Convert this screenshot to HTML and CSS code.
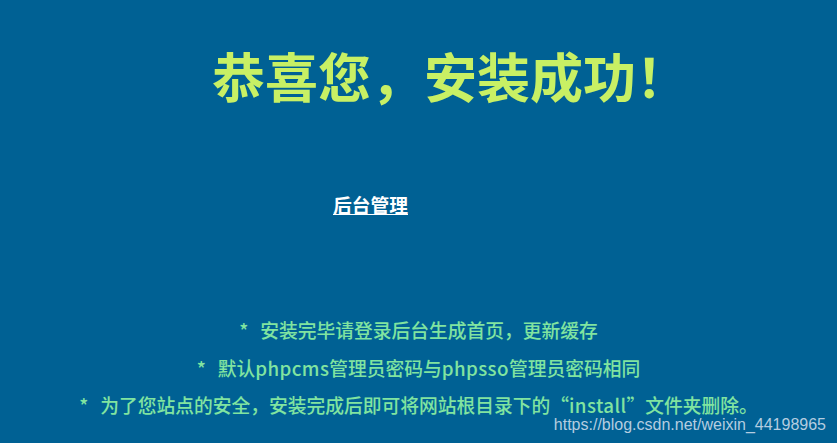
FILE: index.html
```html
<!DOCTYPE html>
<html lang="zh-CN">
<head>
<meta charset="utf-8">
<title>安装成功</title>
<link rel="stylesheet" href="styles.css">
</head>
<body>
<div class="page">
  <h1 class="title">恭喜您，安装成功！</h1>
  <div class="admin"><a class="admin-link" href="#">后台管理</a></div>
  <ul class="notes">
    <li class="note"><span class="star">*</span>安装完毕请登录后台生成首页，更新缓存</li>
    <li class="note"><span class="star">*</span>默认<span class="latin">phpcms</span>管理员密码与<span class="latin">phpsso</span>管理员密码相同</li>
    <li class="note"><span class="star">*</span>为了您站点的安全，安装完成后即可将网站根目录下的“<span class="latin">install</span>”文件夹删除。</li>
  </ul>
  <div class="watermark">https://blog.csdn.net/weixin_44198965</div>
</div>
</body>
</html>
```

FILE: styles.css
```css
html, body {
  margin: 0;
  padding: 0;
}
body {
  background: #006194;
  font-family: "Noto Sans CJK SC", "Noto Sans", sans-serif;
}
.page {
  position: relative;
  width: 837px;
  height: 443px;
  overflow: hidden;
  display: flex;
  flex-direction: column;
  align-items: center;
}
.title {
  margin: 49px 0 0 0;
  padding-left: 64px;
  font-size: 53px;
  line-height: 53px;
  font-weight: 700;
  color: #c8f064;
  white-space: nowrap;
}
.admin {
  margin-top: 84px;
  padding-right: 96px;
  line-height: 37px;
}
.admin-link {
  font-size: 18.75px;
  font-weight: 700;
  color: #ffffff;
  text-decoration: underline;
}
.notes {
  list-style: none;
  margin: 86px 0 0 0;
  padding: 0;
  display: flex;
  flex-direction: column;
  align-items: center;
}
.note {
  font-size: 18.75px;
  line-height: 37.5px;
  font-weight: 500;
  color: #80e4a0;
  white-space: nowrap;
}
.star {
  display: inline-block;
  width: 21px;
  text-align: left;
}
.latin {
  letter-spacing: 0.4px;
}
.watermark {
  position: absolute;
  right: 11px;
  bottom: 9px;
  font-family: "Liberation Sans", Arial, sans-serif;
  font-size: 16px;
  line-height: 18px;
  color: #b4cde0;
}
```
